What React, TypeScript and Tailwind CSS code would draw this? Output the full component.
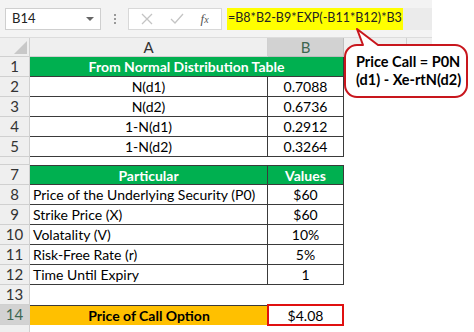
import React from "react";

const font = { fontFamily: "Lato, 'Noto Sans', sans-serif" };

function RowHead({ n, h, sel }: { n: string; h: string; sel?: boolean }) {
  return (
    <div
      className={`${h} w-[30px] shrink-0 flex items-center justify-center border-b border-r border-[#d0d0d0] text-[15px] ${
        sel ? "bg-[#d2d2d2] text-[#3d6650]" : "bg-[#efefef] text-[#333]"
      }`}
    >
      {n}
    </div>
  );
}

export default function App() {
  return (
    <div className="relative w-[474px] h-[332px] overflow-hidden bg-white text-black whitespace-nowrap" style={font}>
      {/* formula bar */}
      <div className="flex items-center h-[38px] w-[432px] bg-[#f3f3f3] border-b border-[#dcdcdc]">
        <div className="ml-[5px] w-[96px] h-[22px] bg-white border border-[#cfcfcf] flex items-center justify-between pl-[6px] pr-[6px] text-[13px] text-[#222]">
          <span>B14</span>
          <span className="w-0 h-0 border-l-[4px] border-r-[4px] border-t-[4px] border-l-transparent border-r-transparent border-t-[#666]" />
        </div>
        <div className="w-[27px] flex flex-col items-center gap-[2px]">
          <span className="w-[2px] h-[2px] bg-[#999]" />
          <span className="w-[2px] h-[2px] bg-[#999]" />
          <span className="w-[2px] h-[2px] bg-[#999]" />
        </div>
        <div className="w-[94px] h-[22px] bg-white border border-[#d8d8d8] flex items-center justify-around px-[4px] text-[#bdbdbd]">
          <svg width="12" height="12" viewBox="0 0 12 12">
            <path d="M1 1 L11 11 M11 1 L1 11" stroke="#c4c4c4" strokeWidth="1.3" fill="none" />
          </svg>
          <svg width="14" height="12" viewBox="0 0 14 12">
            <path d="M1 6 L5 10 L13 1" stroke="#c4c4c4" strokeWidth="1.3" fill="none" />
          </svg>
          <span className="text-[13px] italic text-[#555]" style={{ fontFamily: "'Liberation Serif', serif" }}>
            f<span className="text-[10px]">x</span>
          </span>
        </div>
        <div className="ml-[5px] w-[176px] h-[22px] bg-[#ffff00] flex items-center pl-[1px] text-[12.5px] text-[#222] overflow-hidden">
          =B8*B2-B9*EXP(-B11*B12)*B3
        </div>
        <div className="flex-1 h-[22px] bg-[#ebebeb]" />
      </div>

      {/* column headers */}
      <div className="flex h-[19px]">
        <div className="w-[30px] bg-[#efefef] border-r border-b border-[#d0d0d0] relative">
          <div className="absolute right-[2px] bottom-[2px] w-0 h-0" style={{ borderBottom: "13px solid #c8c8c8", borderLeft: "13px solid transparent" }} />
        </div>
        <div className="w-[238px] bg-[#efefef] border-r border-b border-[#d0d0d0] flex items-center justify-center text-[15px] text-[#333]">A</div>
        <div className="w-[76px] bg-[#d2d2d2] border-r border-b border-[#bdbdbd] flex items-center justify-center text-[15px] text-[#3d6650]">B</div>
        <div className="w-[63px] bg-[#efefef] border-r border-b border-[#d0d0d0]" />
        <div className="w-[25px] bg-[#efefef] border-b border-[#d0d0d0]" />
      </div>

      {/* rows */}
      <div className="flex">
        <div className="flex flex-col">
          {["1", "2", "3", "4", "5"].map((n) => (
            <RowHead key={n} n={n} h="h-[20px]" />
          ))}
          <RowHead n="" h="h-[8px]" />
          {["7", "8", "9", "10", "11", "12", "13"].map((n) => (
            <RowHead key={n} n={n} h="h-[20px]" />
          ))}
          <RowHead n="14" h="h-[20px]" sel />
          <RowHead n="" h="h-[20px]" />
        </div>

        <div className="flex flex-col text-[14px]">
          <div className="h-[20px] w-[314px] bg-[#00b050] text-white font-bold flex items-center justify-center border-b border-r border-[#3a3a3a]">
            From Normal Distribution Table
          </div>
          {[
            ["N(d1)", "0.7088"],
            ["N(d2)", "0.6736"],
            ["1-N(d1)", "0.2912"],
            ["1-N(d2)", "0.3264"],
          ].map(([a, b]) => (
            <div key={a} className="flex h-[20px]">
              <div className="w-[238px] border-b border-r border-[#3a3a3a] flex items-center justify-center">{a}</div>
              <div className="w-[76px] border-b border-r border-[#3a3a3a] flex items-center justify-center">{b}</div>
            </div>
          ))}
          <div className="h-[8px]" />
          <div className="flex h-[20px] bg-[#00b050] text-white font-bold border-t border-[#3a3a3a]">
            <div className="w-[238px] border-b border-r border-[#3a3a3a] flex items-center justify-center">Particular</div>
            <div className="w-[76px] border-b border-r border-[#3a3a3a] flex items-center justify-center">Values</div>
          </div>
          {[
            ["Price of the Underlying Security (P0)", "$60"],
            ["Strike Price (X)", "$60"],
            ["Volatality (V)", "10%"],
            ["Risk-Free Rate (r)", "5%"],
            ["Time Until Expiry", "1"],
          ].map(([a, b]) => (
            <div key={a} className="flex h-[20px]">
              <div className="w-[238px] border-b border-r border-[#3a3a3a] flex items-center pl-[3px]">{a}</div>
              <div className="w-[76px] border-b border-r border-[#3a3a3a] flex items-center justify-center">{b}</div>
            </div>
          ))}
          <div className="h-[20px]" />
          <div className="flex h-[20px]">
            <div className="w-[238px] bg-[#ffc000] border-t border-[#3a3a3a] flex items-center justify-center font-bold">Price of Call Option</div>
            <div className="w-[77px] -ml-[1px] -mt-[1px] h-[22px] border-2 border-[#e01010] flex items-center justify-center">$4.08</div>
          </div>
        </div>
      </div>

      {/* callout */}
      <svg className="absolute left-0 top-0" width="474" height="332" viewBox="0 0 474 332">
        <path
          d="M357 29 L378 45 H455 A12 12 0 0 1 467 57 V85 A12 12 0 0 1 455 97 H357 A12 12 0 0 1 345 85 V57 A12 12 0 0 1 357 45 H363 Z"
          fill="white"
          stroke="#c8161d"
          strokeWidth="2"
          strokeLinejoin="round"
        />
      </svg>
      <div className="absolute left-[356px] top-[53px] text-[14.5px] font-bold leading-[18px] text-black">
        <div>Price Call = P0N</div>
        <div>(d1) - Xe-rtN(d2)</div>
      </div>
    </div>
  );
}
